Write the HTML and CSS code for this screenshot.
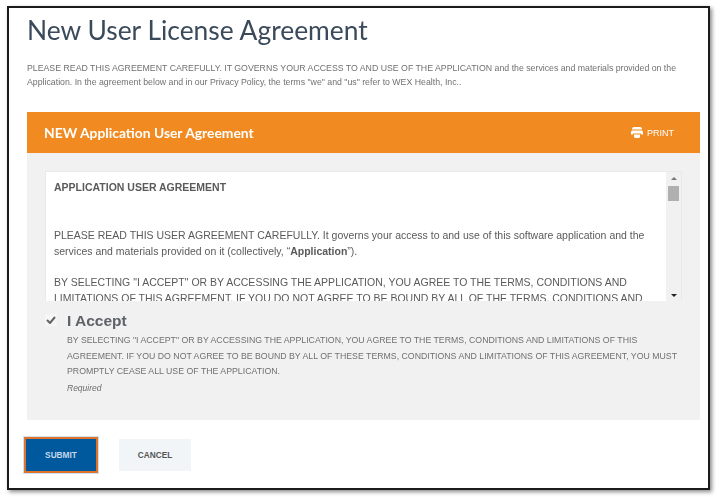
FILE: index.html
```html
<!DOCTYPE html>
<html lang="en">
<head>
<meta charset="utf-8">
<title>New User License Agreement</title>
<link rel="stylesheet" href="styles.css">
</head>
<body>
<main class="frame">
  <h1 class="title">New User License Agreement</h1>
  <p class="intro">PLEASE READ THIS AGREEMENT CAREFULLY. IT GOVERNS YOUR ACCESS TO AND USE OF THE APPLICATION and the services and materials provided on the Application. In the agreement below and in our Privacy Policy, the terms "we" and "us" refer to WEX Health, Inc..</p>
  <section class="card">
    <header class="card-head">
      <h2 class="card-title">NEW Application User Agreement</h2>
      <span class="print">
        <svg class="print-icon" width="12" height="11" viewBox="0 0 12 11"><path d="M3 0h6a2 2 0 0 1 2 2v.5H1V2a2 2 0 0 1 2-2zM1.500 3.500h9A1.500 1.500 0 0 1 12 5v2.500h-2V6.500H2v1H0V5a1.500 1.500 0 0 1 1.500-1.500zM3 7.500h6V9.500a1.500 1.500 0 0 1-1.500 1.500h-3A1.500 1.500 0 0 1 3 9.500z" fill="#fff"/></svg>
        PRINT
      </span>
    </header>
    <div class="card-body">
      <div class="scrollbox">
        <div class="scroll-text">
          <p class="doc-head">APPLICATION USER AGREEMENT</p>
          <p class="doc-p">PLEASE READ THIS USER AGREEMENT CAREFULLY. It governs your access to and use of this software application and the services and materials provided on it (collectively, “<b>Application</b>”).</p>
          <p class="doc-p">BY SELECTING "I ACCEPT" OR BY ACCESSING THE APPLICATION, YOU AGREE TO THE TERMS, CONDITIONS AND LIMITATIONS OF THIS AGREEMENT. IF YOU DO NOT AGREE TO BE BOUND BY ALL OF THE TERMS, CONDITIONS AND LIMITATIONS OF THIS AGREEMENT, YOU MUST PROMPTLY CEASE ALL USE OF THE APPLICATION.</p>
        </div>
        <div class="scrollbar">
          <span class="arrow-up"></span>
          <span class="thumb"></span>
          <span class="arrow-down"></span>
        </div>
      </div>
      <div class="accept">
        <span class="checkbox">
          <svg width="10" height="8" viewBox="0 0 10 8"><path d="M1 4l3 3 5-6" fill="none" stroke="#5f6368" stroke-width="2"/></svg>
        </span>
        <div class="accept-body">
          <div class="accept-label">I Accept</div>
          <p class="accept-text">BY SELECTING "I ACCEPT" OR BY ACCESSING THE APPLICATION, YOU AGREE TO THE TERMS, CONDITIONS AND LIMITATIONS OF THIS AGREEMENT. IF YOU DO NOT AGREE TO BE BOUND BY ALL OF THESE TERMS, CONDITIONS AND LIMITATIONS OF THIS AGREEMENT, YOU MUST PROMPTLY CEASE ALL USE OF THE APPLICATION.</p>
          <div class="required">Required</div>
        </div>
      </div>
    </div>
  </section>
  <div class="actions">
    <button class="btn btn-submit" type="button">SUBMIT</button>
    <button class="btn btn-cancel" type="button">CANCEL</button>
  </div>
</main>
</body>
</html>
```
FILE: styles.css
```css
* { box-sizing: border-box; }
html, body { margin: 0; height: 100%; background: #fff; overflow: hidden; }
body { padding: 6px 0 0 7px; font-family: "Liberation Sans", Arial, sans-serif; }

.frame {
  width: 703px;
  height: 484px;
  border: 2px solid #1b1b1b;
  box-shadow: 2px 2px 4px rgba(0,0,0,.45);
  padding: 0 9px 0 18px;
  background: #fff;
  display: flex;
  flex-direction: column;
}

.title {
  margin: 4px 0 0;
  font: 400 26.400px/36px Lato, sans-serif;
  color: #3a4a5a;
  filter: blur(.35px);
}
.intro {
  margin: 13px 0 0;
  font: 400 8.760px/14px "Liberation Sans", sans-serif;
  color: #707070;
  height: 51px;
  filter: blur(.35px);
}

.card { width: 673px; }
.card-head {
  height: 41px;
  background: #f18a21;
  display: flex;
  align-items: center;
  justify-content: space-between;
  padding: 0 26px 0 17px;
  color: #fff;
}
.card-title {
  margin: 0;
  font: 700 13.850px/20px Lato, sans-serif;
  filter: blur(.3px);
}
.print {
  display: flex;
  align-items: center;
  gap: 4px;
  font: 400 9px/12px "Liberation Sans", sans-serif;
  filter: blur(.3px);
}

.card-body {
  height: 267px;
  background: #f1f1f1;
  padding: 18px 18px 0;
}
.scrollbox {
  height: 130px;
  background: #fff;
  border: 1px solid #e9e9e9;
  border-bottom: 0;
  display: flex;
  overflow: hidden;
}
.scroll-text {
  flex: 1;
  padding: 8px 6px 0 8px;
  font-size: 10.500px;
  line-height: 15.700px;
  color: #5a5a5a;
  overflow: hidden;
  filter: blur(.3px);
}
.doc-head { margin: 0 0 32.400px; font-weight: 700; }
.doc-p { margin: 0 0 15.700px; }

.scrollbar {
  width: 15px;
  flex: none;
  background: #f1f1f1;
  display: flex;
  flex-direction: column;
  align-items: center;
  padding: 5px 0 4px;
}
.arrow-up { border: 3px solid transparent; border-top: 0; border-bottom: 3px solid #777; }
.thumb { width: 11px; height: 15px; margin-top: 6px; background: #b0b0b0; }
.arrow-down { margin-top: auto; border: 3px solid transparent; border-bottom: 0; border-top: 3px solid #222; }

.accept { display: flex; margin-top: 12px; }
.checkbox {
  width: 12px;
  height: 12px;
  margin-top: 1px;
  background: #f6f6f6;
  display: flex;
  align-items: center;
  justify-content: center;
  flex: none;
}
.accept-body { margin-left: 10px; }
.accept-label {
  font: 700 15.500px/16px "Liberation Sans", sans-serif;
  color: #5f6368;
  filter: blur(.25px);
}
.accept-text {
  margin: 4px 0 0;
  max-width: 615px;
  font: 400 8.760px/15.700px "Liberation Sans", sans-serif;
  color: #707070;
  filter: blur(.35px);
}
.required {
  margin-top: 1px;
  font: italic 400 8.500px/14px "Liberation Sans", sans-serif;
  color: #6d6d6d;
  filter: blur(.25px);
}

.actions { display: flex; gap: 23px; margin: 19px 0 0 -1px; }
.btn {
  width: 72px;
  height: 32px;
  border: 0;
  padding: 0;
  font: 700 8.300px/12px "Liberation Sans", sans-serif;
}
.btn-submit {
  width: 70px;
  background: #00599c;
  color: #c4d8ea;
  outline: 2px solid #e0722a;
  box-shadow: 0 0 0 3px #cfe0f0;
}
.btn-cancel { background: #f2f5f8; color: #555; }
```
